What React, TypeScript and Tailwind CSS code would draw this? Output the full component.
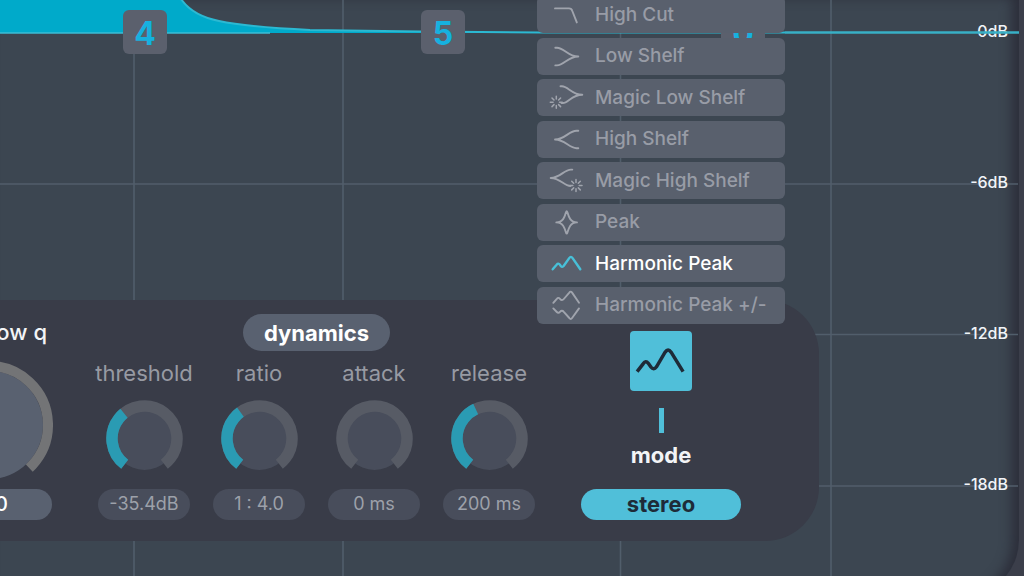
import { useState, type ReactNode } from "react";

const burst = (cx: number, cy: number) => (
  <g transform={`translate(${cx} ${cy})`} strokeWidth={1.5}>
    <path d="M0 -3.2V-6M0 3.2V6M-3.2 0H-6M3.2 0H6M2.3 -2.3L4.3 -4.3M-2.3 -2.3L-4.3 -4.3M2.3 2.3L4.3 4.3M-2.3 2.3L-4.3 4.3" />
  </g>
);

const filters: { name: string; icon: ReactNode }[] = [
  { name: "High Cut", icon: <path d="M9 12.4H23q2.6 0 3.3 2.6L30.8 26.4" /> },
  {
    name: "Low Shelf",
    icon: <path d="M9.3 9.7H11C18 9.7 22 18.5 32.3 18.5C22 18.5 18 27.4 11 27.4H9.3" />,
  },
  {
    name: "Magic Low Shelf",
    icon: (
      <>
        <path d="M14.5 7.3H16C22 7.3 26 15.7 36.3 15.7C26 15.7 22 24 17 24H15.5" />
        {burst(10.3, 23.3)}
      </>
    ),
  },
  {
    name: "High Shelf",
    icon: <path d="M32.3 9.7H30.5C23 9.7 19 18.5 9 18.5C19 18.5 23 27.2 30.5 27.2H32.3" />,
  },
  {
    name: "Magic High Shelf",
    icon: (
      <>
        <path d="M26.3 7.6H25C18 7.6 14 16 4.7 16C14 16 18 23.8 24.5 24" />
        {burst(30, 23.6)}
      </>
    ),
  },
  {
    name: "Peak",
    icon: (
      <path d="M10.3 18.4C17 18.4 18.6 13 20 8.2Q20.7 6.2 21.4 8.2C22.8 13 24.4 18.4 31 18.4C24.4 18.4 22.8 23.8 21.4 28.6Q20.7 30.6 20 28.6C18.6 23.8 17 18.4 10.3 18.4Z" />
    ),
  },
  {
    name: "Harmonic Peak",
    icon: (
      <path
        strokeWidth={2.4}
        d="M6.7 24.3L10.6 19.7Q12.3 17.6 14 19.8L14.8 21Q16.3 22.8 17.8 20.8L23.2 13.1Q24.9 10.6 26.6 13.1L34.3 24.3"
      />
    ),
  },
  {
    name: "Harmonic Peak +/-",
    icon: (
      <>
        <path d="M7.3 15.8L10.8 11.8Q12.3 10 14 11.8Q16 14.2 17.8 12L23.3 5.6Q24.7 3.6 26.1 5.6L33 15.8" />
        <path d="M7.3 21.4L10.8 25Q12.3 26.6 14 24.8Q16 22.6 17.8 24.8L23.3 31Q24.7 33 26.1 31L33 21.4" />
      </>
    ),
  },
];

const knobs = [
  { name: "threshold", value: "-35.4dB", level: 36.3 },
  { name: "ratio", value: "1 : 4.0", level: 37.4 },
  { name: "attack", value: "0 ms", level: 0 },
  { name: "release", value: "200 ms", level: 41.2 },
];

function Knob({ name, value, level }: { name: string; value: string; level: number }) {
  const [amount, setAmount] = useState(level);
  return (
    <div className="flex w-[92px] flex-col items-center">
      <label htmlFor={name} className="text-[22px] leading-7 whitespace-nowrap text-[#979aa3]">
        {name}
      </label>
      <div className="relative mt-[13px] h-[77px] w-[77px]">
        <svg viewBox="0 0 77 77" className="h-full w-full" fill="none">
          <circle cx="38.5" cy="38.5" r="31.5" fill="#484d5b" />
          <g transform="rotate(127.5 38.5 38.5)" strokeWidth="11.5">
            <circle cx="38.5" cy="38.5" r="32.5" stroke="#575b65" pathLength={360} strokeDasharray="285 75" />
            {amount > 0 && (
              <circle
                cx="38.5"
                cy="38.5"
                r="32.5"
                stroke="#2a9bb3"
                pathLength={360}
                strokeDasharray={`${amount * 2.85} 360`}
              />
            )}
          </g>
        </svg>
        <input
          id={name}
          type="range"
          min={0}
          max={100}
          step={0.1}
          value={amount}
          onChange={(e) => setAmount(Number(e.target.value))}
          className="absolute inset-0 h-full w-full cursor-pointer opacity-0"
        />
      </div>
      <output
        htmlFor={name}
        className="mt-3 h-[31px] w-full rounded-full bg-[#484d5b] text-center text-lg leading-[30px] whitespace-nowrap text-[#9da1aa]"
      >
        {value}
      </output>
    </div>
  );
}

function Band({ n, className }: { n: number; className: string }) {
  return (
    <button
      type="button"
      className={`absolute top-2.5 h-11 w-11 rounded-md bg-[#5b606d] text-[32px] leading-[48px] font-bold text-[#16b1df] ${className}`}
    >
      {n}
    </button>
  );
}

export default function App() {
  const [selected, setSelected] = useState("Harmonic Peak");
  return (
    <main className="relative min-h-screen overflow-hidden bg-[#3b3e4a] pt-[300px] font-['Inter',sans-serif]">
      <div className="absolute top-0 right-[5px] -bottom-5 left-0 rounded-br-[56px] bg-[#3c4651] shadow-[inset_-10px_0_12px_-3px_#2c2e3a]" />
      <svg
        viewBox="0 0 1024 576"
        preserveAspectRatio="xMaxYMin slice"
        className="absolute inset-0 h-full w-full"
        fill="none"
        stroke="#515e6b"
        strokeWidth="1.6"
      >
        <path d="M134 0V576M343 0V576M620.5 0V576M831 0V576" />
        <path d="M0 184H1018M0 334.5H1018M0 486H1018" />
      </svg>
      <ul className="absolute top-[19px] right-4 flex flex-col gap-[127px] text-right text-base leading-6 font-medium text-[#f1f4f8]">
        <li>0dB</li>
        <li>-6dB</li>
        <li>-12dB</li>
        <li>-18dB</li>
      </ul>
      <svg
        viewBox="0 0 1024 576"
        preserveAspectRatio="xMaxYMin slice"
        className="pointer-events-none absolute inset-0 h-full w-full"
        fill="none"
      >
        <path
          d="M0 0H181C190 12 204 18 219 21C240 25.5 270 28 310 30L420 31.5L540 32.5V33H0Z"
          fill="#00aaca"
        />
        <path d="M0 33H270" stroke="#3cbcd4" strokeWidth="1.5" />
        <path
          d="M181 -1C190 12 204 18 219 21C240 25.5 270 28 310 30L420 31.5L540 32.5H785"
          stroke="#2cb9d2"
          strokeWidth="2"
        />
        <path d="M785 32.5H1019" stroke="#38b0c6" strokeWidth="2.5" />
      </svg>
      <Band n={4} className="left-[123px]" />
      <Band n={5} className="left-[421px]" />
      <Band n={0} className="left-[721px]" />

      <section className="relative flex w-4/5 rounded-r-[54px] bg-[#393c48] pb-[21px]">
        <div className="-ml-[75px] flex w-32 shrink-0 flex-col items-center pt-[18px]">
          <span className="self-end pr-1.5 text-[22px] leading-7 font-medium whitespace-nowrap text-[#f3f4f6]">
            narrow q
          </span>
          <svg viewBox="0 0 128 128" className="mt-[15px] h-32 w-32" fill="none">
            <circle cx="64" cy="64" r="54" fill="#596170" />
            <circle
              cx="64"
              cy="64"
              r="59"
              stroke="#737476"
              strokeWidth="10"
              pathLength={360}
              strokeDasharray="274 86"
              transform="rotate(133 64 64)"
            />
          </svg>
          <output className="h-[31px] w-[126px] rounded-full bg-[#596170] pr-11 text-right text-xl leading-[30px] font-medium text-white">
            100
          </output>
        </div>

        <div className="ml-[45px] flex shrink-0 flex-col items-center pt-3.5">
          <button
            type="button"
            className="h-[37px] w-[147px] rounded-full bg-[#596170] text-[22px] leading-[36px] font-bold text-white"
          >
            dynamics
          </button>
          <div className="mt-2 flex gap-[23px]">
            {knobs.map((k) => (
              <Knob key={k.name} {...k} />
            ))}
          </div>
        </div>

        <div className="ml-[46px] flex w-40 shrink-0 flex-col items-center pt-[31px]">
          <button type="button" aria-label="Filter type" className="h-[60px] w-[62px] rounded-[4px] bg-[#50bfd9]">
            <svg viewBox="0 0 61 60" className="h-full w-full" fill="none" stroke="#1e2b38" strokeWidth="3.5">
              <path d="M6.6 40.6L12.8 32.6Q15.2 29.2 17.8 32.3L20.4 36Q23.2 39.6 26 35.8L34.6 21.2Q37.6 16.6 40.6 21.2L52.6 40.6" />
            </svg>
          </button>
          <span className="mt-[17px] h-[25px] w-[5px] bg-[#50bfd9]" />
          <span className="mt-2 text-[22px] leading-7 font-bold text-[#f3f4f6]">mode</span>
          <button
            type="button"
            className="mt-5 h-[31px] w-full rounded-full bg-[#50bfd9] text-[22px] leading-[29px] font-bold text-[#1e2b38]"
          >
            stereo
          </button>
        </div>
      </section>

      <ul className="absolute -top-1 left-[537px] flex h-[328px] w-[248px] flex-col justify-between">
        {filters.map((f) => {
          const active = f.name === selected;
          return (
            <li key={f.name}>
              <button
                type="button"
                onClick={() => setSelected(f.name)}
                className="flex h-[37px] w-full items-center gap-[9px] rounded-md bg-[#59606d] pl-[9px] text-left"
              >
                <svg
                  viewBox="0 0 40 37"
                  className={active ? "h-[37px] w-10 text-[#48c0d8]" : "h-[37px] w-10 text-[#a0a4ad]"}
                  fill="none"
                  stroke="currentColor"
                  strokeWidth="1.9"
                  strokeLinejoin="round"
                  strokeLinecap="round"
                >
                  {f.icon}
                </svg>
                <span
                  className={
                    active
                      ? "text-[19px] leading-6 font-medium whitespace-nowrap text-white"
                      : "text-[19px] leading-6 font-medium whitespace-nowrap text-[#989ca6]"
                  }
                >
                  {f.name}
                </span>
              </button>
            </li>
          );
        })}
      </ul>
    </main>
  );
}
